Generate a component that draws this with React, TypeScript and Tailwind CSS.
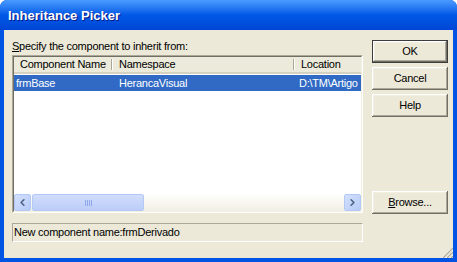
import { ChevronLeft, ChevronRight } from "lucide-react";

const raised =
  "bg-[#ECE9D8] shadow-[inset_-1px_-1px_0_#716F64,inset_1px_1px_0_#FFFFFF,inset_-2px_-2px_0_#ACA899,inset_2px_2px_0_#F1EFE2]";

const DialogButton = ({ label, def, mt }: { label: React.ReactNode; def?: boolean; mt: string }) => (
  <div className={`${mt} h-[23px] w-[76px] ${def ? "border border-[#3C3C3C]" : ""}`}>
    <div className={`${raised} h-full w-full flex items-center justify-center text-black`}>{label}</div>
  </div>
);

const ScrollButton = ({ children }: { children: React.ReactNode }) => (
  <div className="w-[17px] h-[17px] rounded-[2px] border border-[#B4C8F6] bg-gradient-to-br from-[#D4E0FC] to-[#B6CBF8] flex items-center justify-center text-[#4D6185]">
    {children}
  </div>
);

const columns = [
  { name: "Component Name", w: "w-[99px]" },
  { name: "Namespace", w: "w-[182px]" },
  { name: "Location", w: "w-[120px]" },
];

export default function App() {
  return (
    <div className="w-[457px] h-[262px] flex flex-col bg-[#0054E3] rounded-t-[7px] overflow-hidden font-['Liberation_Sans',Arial,sans-serif] text-[11px] leading-[13px] tracking-[-0.25px]">
      {/* title bar */}
      <div className="h-[30px] shrink-0 flex items-center pl-[8px] bg-gradient-to-b from-[#4A9BFF] via-[#0058E6] to-[#0046D5] text-white font-bold text-[13px] tracking-normal [text-shadow:1px_1px_0_#0A1883]">
        Inheritance Picker
      </div>

      {/* client area */}
      <div className="flex-1 mx-[4px] mb-[4px] bg-[#ECE9D8] flex pl-[8px] relative">
        <div className="w-[351px] flex flex-col pt-[10px]">
          <div className="h-[13px] text-black">
            <span className="underline">S</span>pecify the component to inherit from:
          </div>

          {/* list view */}
          <div className="mt-[2px] h-[158px] border border-t-[#ACA899] border-l-[#ACA899] border-b-white border-r-white">
            <div className="h-full border border-t-[#716F64] border-l-[#716F64] border-b-[#F1EFE2] border-r-[#F1EFE2] bg-white flex flex-col overflow-hidden">
              <div className="h-[17px] shrink-0 flex bg-[#EBEADB] border-b-[2px] border-[#D6D2C2] overflow-hidden">
                {columns.map((c) => (
                  <div key={c.name} className={`${c.w} shrink-0 flex items-center pl-[6px] relative text-black whitespace-nowrap`}>
                    {c.name}
                    <div className="absolute right-0 top-[2px] bottom-[2px] w-[2px] border-l border-[#ACA899] border-r border-r-white" />
                  </div>
                ))}
              </div>
              <div className="mt-[1px] h-[16px] shrink-0 flex bg-[#316AC5] text-white items-center">
                <div className="w-[99px] pl-[2px]">frmBase</div>
                <div className="w-[182px] pl-[6px]">HerancaVisual</div>
                <div className="flex-1 pl-[4px] whitespace-nowrap overflow-hidden">D:\TM\Artigo</div>
              </div>
              <div className="flex-1" />
              {/* horizontal scrollbar */}
              <div className="h-[17px] shrink-0 flex bg-gradient-to-b from-[#FEFEFB] to-[#F1EFE5]">
                <ScrollButton>
                  <ChevronLeft className="w-[11px] h-[11px]" strokeWidth={3.5} />
                </ScrollButton>
                <div className="ml-[1px] w-[112px] h-[17px] rounded-[2px] border border-[#B4C8F6] bg-gradient-to-b from-[#D0DDFB] to-[#BCCDF8] flex items-center justify-center gap-[1px]">
                  {[0, 1, 2, 3].map((i) => (
                    <div key={i} className="w-[1px] h-[6px] bg-[#8EA7E9]" />
                  ))}
                </div>
                <div className="flex-1" />
                <ScrollButton>
                  <ChevronRight className="w-[11px] h-[11px]" strokeWidth={3.5} />
                </ScrollButton>
              </div>
            </div>
          </div>

          {/* status box */}
          <div className="mt-[10px] h-[19px] border border-t-[#ACA899] border-l-[#ACA899] border-b-white border-r-white flex items-center pl-[1px] text-black">
            New component name:frmDerivado
          </div>
        </div>

        {/* buttons */}
        <div className="ml-[9px] flex flex-col pt-[10px]">
          <DialogButton label="OK" def mt="mt-0" />
          <DialogButton label="Cancel" mt="mt-[4px]" />
          <DialogButton label="Help" mt="mt-[4px]" />
          <DialogButton
            label={
              <span>
                <span className="underline">B</span>rowse...
              </span>
            }
            mt="mt-[74px]"
          />
        </div>

        {/* size grip */}
        <svg className="absolute right-0 bottom-0" width="12" height="12" viewBox="0 0 12 12">
          {[0, 4, 8].map((o) => (
            <g key={o}>
              <line x1={12} y1={o + 1} x2={o + 1} y2={12} stroke="#FFFFFF" strokeWidth={1} />
              <line x1={12} y1={o + 2} x2={o + 2} y2={12} stroke="#ACA899" strokeWidth={1.2} />
            </g>
          ))}
        </svg>
      </div>
    </div>
  );
}
